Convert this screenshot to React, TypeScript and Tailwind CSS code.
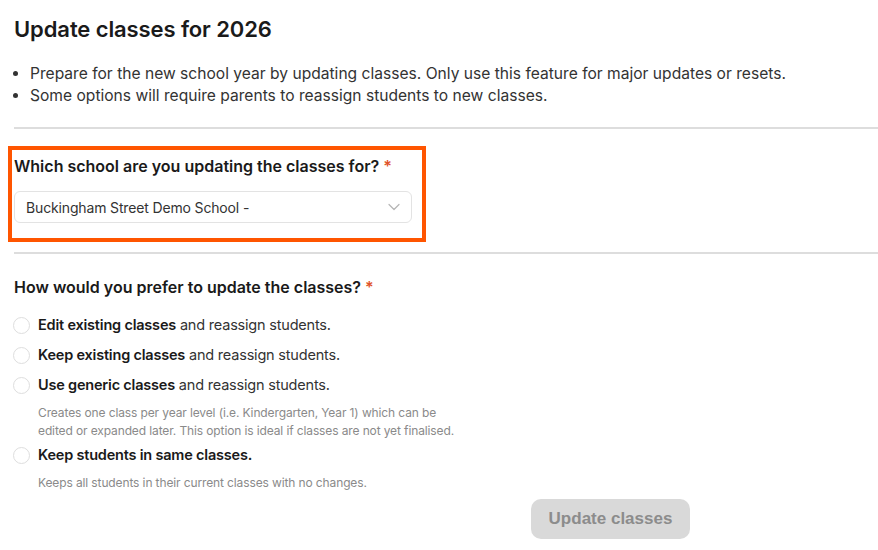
import React from "react";

const font = { fontFamily: "Inter, 'Noto Sans', sans-serif" };

interface Option {
  bold: string;
  rest: string;
  note?: string[];
}

const options: Option[] = [
  { bold: "Edit existing classes", rest: " and reassign students." },
  { bold: "Keep existing classes", rest: " and reassign students." },
  {
    bold: "Use generic classes",
    rest: " and reassign students.",
    note: [
      "Creates one class per year level (i.e. Kindergarten, Year 1) which can be",
      "edited or expanded later. This option is ideal if classes are not yet finalised.",
    ],
  },
  {
    bold: "Keep students in same classes.",
    rest: "",
    note: ["Keeps all students in their current classes with no changes."],
  },
];

function Radio() {
  return <span className="w-[17px] h-[17px] rounded-full border border-[#dedede] bg-white shrink-0" />;
}

export default function App() {
  return (
    <div className="w-[878px] h-[550px] bg-white pl-[14px] pt-[15px] text-[#1f1f1f] overflow-hidden" style={font}>
      <h1 className="text-[22px] leading-[28px] font-semibold text-[#1a1a1a] tracking-[-0.1px]">Update classes for 2026</h1>

      <ul className="mt-[20px] list-disc pl-[16px] text-[15.6px] leading-[22px] text-[#333]">
        <li>Prepare for the new school year by updating classes. Only use this feature for major updates or resets.</li>
        <li>Some options will require parents to reassign students to new classes.</li>
      </ul>

      <div className="mt-[20px] h-[2px] bg-[#dddddd]" />

      <div className="mt-[17px] -ml-[6px] w-[418px] border-4 border-[#ff5500] pl-[2px] pr-[10px] pt-[5px] pb-[15px]">
        <div className="text-[16px] leading-[22px] font-semibold text-[#1a1a1a]">
          Which school are you updating the classes for? <span className="text-[#e0532a]">*</span>
        </div>
        <div className="mt-[14px] h-[32px] rounded-[6px] border border-[#e3e3e3] flex items-center justify-between pl-[11px] pr-[11px]">
          <span className="text-[14px] tracking-[-0.15px] text-[#333]">Buckingham Street Demo School -</span>
          <svg width="12" height="8" viewBox="0 0 12 8" fill="none">
            <path d="M1 1.5l5 5 5-5" stroke="#b5b5b5" strokeWidth="1.2" strokeLinecap="round" strokeLinejoin="round" />
          </svg>
        </div>
      </div>

      <div className="mt-[10px] h-[2px] bg-[#dddddd]" />

      <div className="mt-[22px] text-[16px] leading-[22px] font-semibold text-[#1a1a1a]">
        How would you prefer to update the classes? <span className="text-[#e0532a]">*</span>
      </div>

      <div className="mt-[16px] flex flex-col gap-[8px]">
        {options.map((o) => (
          <div key={o.bold}>
            <label className="flex items-center gap-[8px] -ml-[1px] h-[22px]">
              <Radio />
              <span className="text-[14.5px] tracking-[-0.2px] text-[#333]">
                <span className="font-semibold text-[#1a1a1a]">{o.bold}</span>
                {o.rest}
              </span>
            </label>
            {o.note && (
              <div className="mt-[8px] -mb-[4px] pl-[24px] text-[12px] tracking-[-0.12px] leading-[18px] text-[#8a8a8a]">
                {o.note.map((n) => (
                  <div key={n}>{n}</div>
                ))}
              </div>
            )}
          </div>
        ))}
      </div>

      <div className="w-[676px] flex justify-end mt-[11px]">
        <button
          className="w-[159px] h-[40px] rounded-[10px] bg-[#d9d9d9] text-[#8c8c8c] text-[17px] font-bold"
          style={{ fontFamily: "'Liberation Sans', Arial, sans-serif" }}
        >
          Update classes
        </button>
      </div>
    </div>
  );
}
